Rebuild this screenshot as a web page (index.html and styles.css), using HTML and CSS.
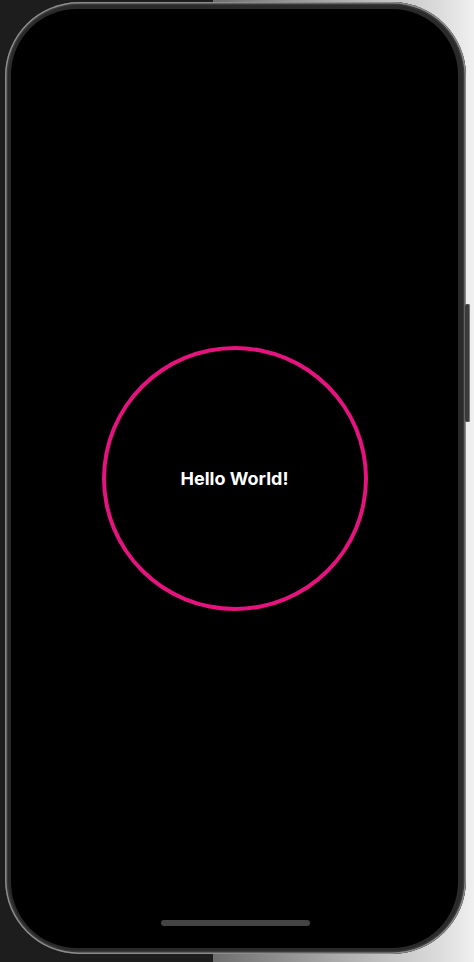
FILE: index.html
```html
<!DOCTYPE html>
<html>
<head>
<meta charset="utf-8">
<link rel="stylesheet" href="styles.css">
</head>
<body>
<div class="backdrop">
  <div class="phone">
    <div class="side-button"></div>
    <div class="screen">
      <div class="ring">
        <span class="hello">Hello World!</span>
      </div>
      <div class="home-indicator"></div>
    </div>
  </div>
</div>
</body>
</html>
```
FILE: styles.css
```css
html, body {
  margin: 0;
  padding: 0;
}
body {
  width: 474px;
  height: 962px;
  overflow: hidden;
  background:
    linear-gradient(to right, #1d1d1d 0, #1d1d1d 213px, transparent 213px),
    linear-gradient(to right, #6e6e6e 213px, #a8a8a8 330px, #dcdcdc 440px, #f0f0f0 474px);
  font-family: "Inter", "Roboto", "Liberation Sans", sans-serif;
}
.backdrop {
  padding: 2px 8px 8px 5px;
}
.phone {
  position: relative;
  width: 461px;
  height: 952px;
  box-sizing: border-box;
  border-radius: 74px;
  background: #2a2a2a;
  box-shadow: inset 0 0 0 1.5px #8c8c8c, inset 0 0 0 3px #3a3a3a;
  padding: 7px 8px 6px 6px;
}
.side-button {
  position: absolute;
  right: -4px;
  top: 302px;
  width: 5px;
  height: 118px;
  border-radius: 2px;
  background: #3b3b3b;
  box-shadow: inset -1px 0 0 #777;
}
.screen {
  position: relative;
  height: 100%;
  border-radius: 66px;
  background: #000;
  display: flex;
  align-items: center;
  justify-content: center;
}
.ring {
  width: 258px;
  height: 257px;
  border: 4px solid #e5137e;
  border-radius: 50%;
  display: flex;
  align-items: center;
  justify-content: center;
}
.hello {
  color: #ffffff;
  font-weight: 700;
  font-size: 18px;
  letter-spacing: 0;
}
.home-indicator {
  position: absolute;
  left: 50%;
  bottom: 22px;
  width: 149px;
  height: 6px;
  margin-left: -74px;
  border-radius: 3px;
  background: #444;
}
```
